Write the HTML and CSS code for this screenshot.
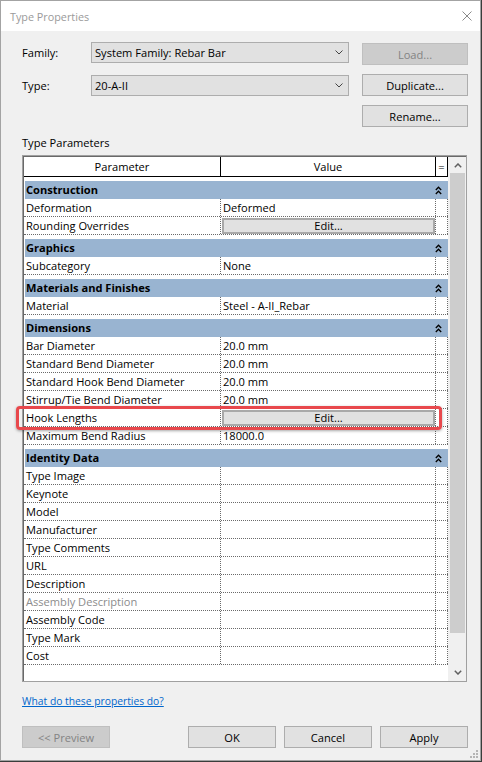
FILE: index.html
```html
<!DOCTYPE html>
<html>
<head>
<meta charset="utf-8">
<title>Type Properties</title>
<link rel="stylesheet" href="styles.css">
</head>
<body>
<div class="window">
  <div class="titlebar">
    <span class="title">Type Properties</span>
    <svg class="close" width="10" height="10" viewBox="0 0 10 10"><path d="M0.5 0.5 L9.5 9.5 M9.5 0.5 L0.5 9.5" stroke="#8a8a8a" stroke-width="1" fill="none"/></svg>
  </div>
  <div class="content">
    <div class="top">
      <div class="fields">
        <div class="field">
          <span class="field-label">Family:</span>
          <div class="combo"><span>System Family: Rebar Bar</span><svg width="8" height="5" viewBox="0 0 8 5"><polyline points="0.5,0.5 4,4 7.5,0.5" stroke="#444" stroke-width="1" fill="none"/></svg></div>
        </div>
        <div class="field">
          <span class="field-label">Type:</span>
          <div class="combo"><span>20-A-II</span><svg width="8" height="5" viewBox="0 0 8 5"><polyline points="0.5,0.5 4,4 7.5,0.5" stroke="#444" stroke-width="1" fill="none"/></svg></div>
        </div>
      </div>
      <div class="actions">
        <div class="btn btn-disabled">Load...</div>
        <div class="btn">Duplicate...</div>
        <div class="btn">Rename...</div>
      </div>
    </div>
    <div class="section-label">Type Parameters</div>
    <div class="table">
      <div class="table-inner">
        <div class="grid">
          <div class="head">
            <div class="hcell">Parameter</div>
            <div class="hcell">Value</div>
            <div class="hcell">=</div>
          </div>

          <div class="group"><span>Construction</span><svg class="dchev" width="7" height="9" viewBox="0 0 7 9"><polyline points="0.8,4 3.5,1.2 6.2,4" /><polyline points="0.8,8 3.5,5.2 6.2,8" /></svg></div>
          <div class="row"><div class="c1">Deformation</div><div class="c2">Deformed</div><div class="c3"></div></div>
          <div class="row"><div class="c1">Rounding Overrides</div><div class="c2"><div class="edit">Edit...</div></div><div class="c3"></div></div>

          <div class="group"><span>Graphics</span><svg class="dchev" width="7" height="9" viewBox="0 0 7 9"><polyline points="0.8,4 3.5,1.2 6.2,4" /><polyline points="0.8,8 3.5,5.2 6.2,8" /></svg></div>
          <div class="row"><div class="c1">Subcategory</div><div class="c2">None</div><div class="c3"></div></div>

          <div class="group"><span>Materials and Finishes</span><svg class="dchev" width="7" height="9" viewBox="0 0 7 9"><polyline points="0.8,4 3.5,1.2 6.2,4" /><polyline points="0.8,8 3.5,5.2 6.2,8" /></svg></div>
          <div class="row"><div class="c1">Material</div><div class="c2">Steel - A-II_Rebar</div><div class="c3"></div></div>

          <div class="group"><span>Dimensions</span><svg class="dchev" width="7" height="9" viewBox="0 0 7 9"><polyline points="0.8,4 3.5,1.2 6.2,4" /><polyline points="0.8,8 3.5,5.2 6.2,8" /></svg></div>
          <div class="row"><div class="c1">Bar Diameter</div><div class="c2">20.0 mm</div><div class="c3"></div></div>
          <div class="row"><div class="c1">Standard Bend Diameter</div><div class="c2">20.0 mm</div><div class="c3"></div></div>
          <div class="row"><div class="c1">Standard Hook Bend Diameter</div><div class="c2">20.0 mm</div><div class="c3"></div></div>
          <div class="row"><div class="c1">Stirrup/Tie Bend Diameter</div><div class="c2">20.0 mm</div><div class="c3"></div></div>
          <div class="row"><div class="c1">Hook Lengths</div><div class="c2"><div class="edit">Edit...</div></div><div class="c3"></div></div>
          <div class="row"><div class="c1">Maximum Bend Radius</div><div class="c2">18000.0</div><div class="c3"></div></div>

          <div class="group"><span>Identity Data</span><svg class="dchev" width="7" height="9" viewBox="0 0 7 9"><polyline points="0.8,4 3.5,1.2 6.2,4" /><polyline points="0.8,8 3.5,5.2 6.2,8" /></svg></div>
          <div class="row"><div class="c1">Type Image</div><div class="c2"></div><div class="c3"></div></div>
          <div class="row"><div class="c1">Keynote</div><div class="c2"></div><div class="c3"></div></div>
          <div class="row"><div class="c1">Model</div><div class="c2"></div><div class="c3"></div></div>
          <div class="row"><div class="c1">Manufacturer</div><div class="c2"></div><div class="c3"></div></div>
          <div class="row"><div class="c1">Type Comments</div><div class="c2"></div><div class="c3"></div></div>
          <div class="row"><div class="c1">URL</div><div class="c2"></div><div class="c3"></div></div>
          <div class="row"><div class="c1">Description</div><div class="c2"></div><div class="c3"></div></div>
          <div class="row"><div class="c1 muted">Assembly Description</div><div class="c2"></div><div class="c3"></div></div>
          <div class="row"><div class="c1">Assembly Code</div><div class="c2"></div><div class="c3"></div></div>
          <div class="row"><div class="c1">Type Mark</div><div class="c2"></div><div class="c3"></div></div>
          <div class="row"><div class="c1">Cost</div><div class="c2"></div><div class="c3"></div></div>
        </div>
        <div class="scrollbar">
          <div class="sb-up"><svg width="8" height="5" viewBox="0 0 8 5"><polyline points="0.8,4.2 4,1 7.2,4.2" stroke="#606060" stroke-width="1.5" fill="none"/></svg></div>
          <div class="sb-thumb"></div>
          <div class="sb-track"></div>
          <div class="sb-down"><svg width="8" height="5" viewBox="0 0 8 5"><polyline points="0.8,0.8 4,4 7.2,0.8" stroke="#606060" stroke-width="1.5" fill="none"/></svg></div>
        </div>
      </div>
    </div>
    <div class="help"><span class="link">What do these properties do?</span></div>
    <div class="bottom">
      <div class="btn btn-disabled wide">&lt;&lt; Preview</div>
      <div class="bottom-right">
        <div class="btn wide">OK</div>
        <div class="btn wide">Cancel</div>
        <div class="btn wide">Apply</div>
      </div>
    </div>
  </div>
  <div class="highlight"></div>
  <svg class="grip" width="8" height="8" viewBox="0 0 8 8" fill="#b5b5b5"><rect x="6" y="0" width="2" height="2"/><rect x="3" y="3" width="2" height="2"/><rect x="6" y="3" width="2" height="2"/><rect x="0" y="6" width="2" height="2"/><rect x="3" y="6" width="2" height="2"/><rect x="6" y="6" width="2" height="2"/></svg>
</div>
</body>
</html>
```

FILE: styles.css
```css
* { box-sizing: border-box; }
html { background: #3a3d3b; }
body {
  margin: 0;
  font-family: "Open Sans", "Noto Sans", sans-serif;
  font-size: 11.1px;
  color: #000;
}
.window {
  width: 481px;
  height: 761px;
  border: 1px solid #a3a3a3;
  background: #f0f0f0;
  display: flex;
  flex-direction: column;
  position: relative;
}
.titlebar {
  height: 30px;
  flex: none;
  background: #fff;
  display: flex;
  align-items: center;
  justify-content: space-between;
  padding: 0 8px 0 9px;
  color: #9a9a9a;
  font-size: 10.8px;
}
.close { display: block; }
.content {
  padding: 0 12px 0 21px;
  display: flex;
  flex-direction: column;
}
.top {
  display: flex;
  gap: 13px;
}
.fields {
  width: 327px;
  padding-top: 11px;
  display: flex;
  flex-direction: column;
  gap: 12px;
}
.field {
  display: flex;
  align-items: center;
  height: 21px;
}
.field-label { width: 69px; }
.combo {
  width: 258px;
  height: 21px;
  background: #e1e1e1;
  border: 1px solid #adadad;
  display: flex;
  align-items: center;
  justify-content: space-between;
  padding: 0 5px 0 3px;
}
.combo svg { display: block; }
.actions {
  width: 106px;
  padding-top: 12px;
  display: flex;
  flex-direction: column;
  gap: 9px;
}
.btn {
  height: 22px;
  background: #e1e1e1;
  border: 1px solid #adadad;
  display: flex;
  align-items: center;
  justify-content: center;
}
.btn-disabled {
  background: #cccccc;
  border-color: #bfbfbf;
  color: #838383;
}
.wide { width: 88px; }
.section-label {
  margin-top: 8px;
  line-height: 15px;
  height: 15px;
}
.table {
  margin-top: 5px;
  width: 445px;
  height: 527px;
  border: 1px solid #a0a0a0;
  background: #fff;
}
.table-inner {
  height: 100%;
  border-left: 1px solid #696969;
  border-top: 1px solid #696969;
  display: flex;
}
.grid { width: 424px; }
.head {
  display: grid;
  grid-template-columns: 197px 215px 12px;
  height: 20px;
  border-bottom: 1px solid #000;
}
.hcell {
  border-right: 1px solid #000;
  text-align: center;
  line-height: 19px;
}
.group {
  margin-top: 4px;
  margin-left: 1px;
  height: 18px;
  background: #99b4d1;
  font-weight: bold;
  display: flex;
  align-items: center;
  justify-content: space-between;
  padding: 0 6px 0 1px;
  line-height: 18px;
}
.dchev {
  display: block;
  fill: none;
  stroke: #000;
  stroke-width: 1.3;
}
.row {
  display: grid;
  grid-template-columns: 197px 215px 12px;
  height: 18px;
  border-bottom: 1px dotted #6a6a6a;
}
.row > div {
  border-right: 1px dotted #6a6a6a;
  line-height: 17px;
  white-space: nowrap;
  overflow: hidden;
}
.c1 { padding-left: 2px; }
.c2 { padding-left: 2px; }
.c2:has(.edit) { padding-left: 0; }
.muted { color: #8c8c8c; }
.edit {
  margin: 1px 0 0 1px;
  width: 213px;
  height: 16px;
  background: #e1e1e1;
  border: 2px solid #a9a9a9;
  text-align: center;
  line-height: 12px;
}
.scrollbar {
  width: 18px;
  background: #f0f0f0;
  display: flex;
  flex-direction: column;
}
.sb-up, .sb-down {
  display: flex;
  align-items: center;
  justify-content: center;
  padding-left: 1px;
}
.sb-up { height: 16px; }
.sb-down { height: 17px; }
.sb-up svg, .sb-down svg { display: block; }
.sb-thumb {
  margin-left: 2px;
  width: 15px;
  height: 460px;
  background: #cdcdcd;
}
.sb-track { flex: 1; }
.help {
  margin-top: 12px;
  line-height: 15px;
  height: 15px;
  font-size: 10.3px;
}
.link {
  color: #0066cc;
  text-decoration: underline;
}
.bottom {
  margin-top: 17px;
  display: flex;
  justify-content: space-between;
}
.bottom-right {
  display: flex;
  gap: 8px;
}
.highlight {
  position: absolute;
  left: 15px;
  top: 405px;
  width: 426px;
  height: 24px;
  border: 3px solid #e8484c;
  border-radius: 4px;
  box-shadow: 0 1px 3px rgba(0, 0, 0, 0.35);
}
.grip {
  position: absolute;
  right: 2px;
  bottom: 2px;
  display: block;
}
```
